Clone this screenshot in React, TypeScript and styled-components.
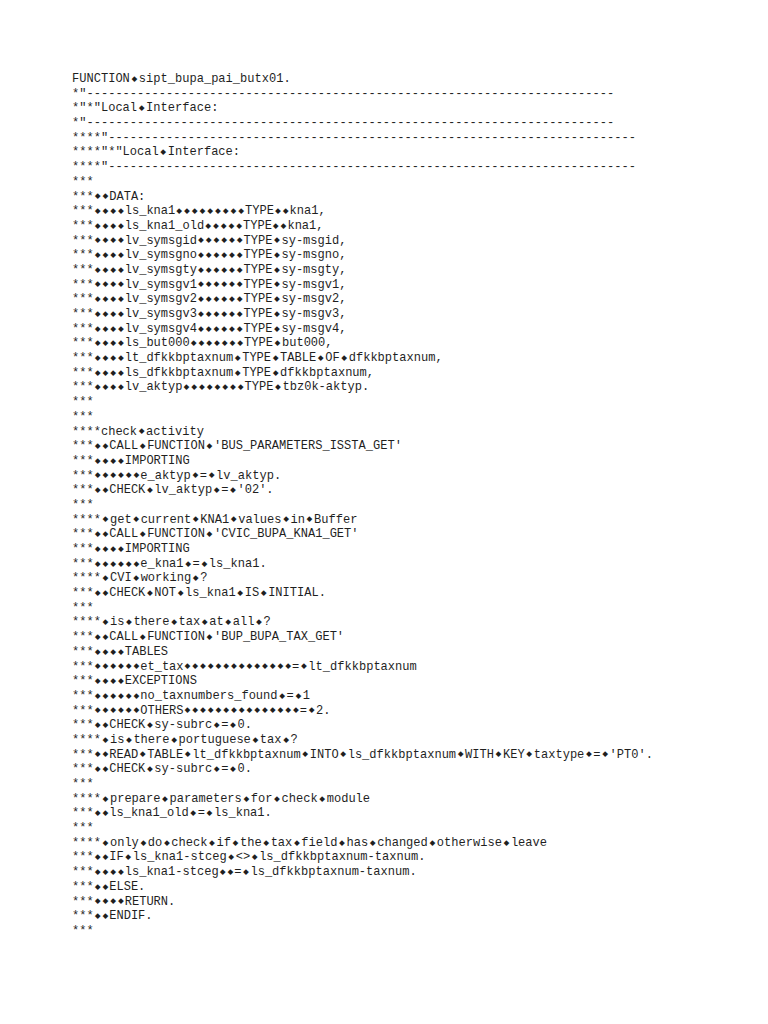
import React from "react";
import styled, { createGlobalStyle } from "styled-components";

const Global = createGlobalStyle`
  html, body { margin: 0; padding: 0; background: #ffffff; }
  body { width: 768px; min-height: 1024px; }
`;

const Page = styled.main`
  box-sizing: border-box;
  width: 768px;
  min-height: 1024px;
  padding: 72px 0 0 72px;
  background: #ffffff;
`;

const Listing = styled.div`
  display: flex;
  flex-direction: column;
  font-family: "Liberation Mono", "Cousine", monospace;
  font-size: 12.05px;
  line-height: 14.69px;
  color: #1f1f1f;
`;

const Line = styled.div`
  height: 14.69px;
  white-space: pre;
`;

const Gap = styled.span<{ $run: boolean }>`
  display: inline-block;
  width: ${(p) => (p.$run ? "7.75px" : "9px")};
  text-align: center;
  font-family: "DejaVu Sans", sans-serif;
  font-size: 7.6px;
  line-height: 1;
  vertical-align: 1.2px;
  color: #1f1f1f;
`;

const D = "◆";
const dash = "-".repeat(73);

const lines: string[] = [
  `FUNCTION◆sipt_bupa_pai_butx01.`,
  `*"${dash}`,
  `*"*"Local◆Interface:`,
  `*"${dash}`,
  `****"${dash}`,
  `****"*"Local◆Interface:`,
  `****"${dash}`,
  `***`,
  `***◆◆DATA:`,
  `***◆◆◆◆ls_kna1◆◆◆◆◆◆◆◆◆TYPE◆◆kna1,`,
  `***◆◆◆◆ls_kna1_old◆◆◆◆◆TYPE◆◆kna1,`,
  `***◆◆◆◆lv_symsgid◆◆◆◆◆◆TYPE◆sy-msgid,`,
  `***◆◆◆◆lv_symsgno◆◆◆◆◆◆TYPE◆sy-msgno,`,
  `***◆◆◆◆lv_symsgty◆◆◆◆◆◆TYPE◆sy-msgty,`,
  `***◆◆◆◆lv_symsgv1◆◆◆◆◆◆TYPE◆sy-msgv1,`,
  `***◆◆◆◆lv_symsgv2◆◆◆◆◆◆TYPE◆sy-msgv2,`,
  `***◆◆◆◆lv_symsgv3◆◆◆◆◆◆TYPE◆sy-msgv3,`,
  `***◆◆◆◆lv_symsgv4◆◆◆◆◆◆TYPE◆sy-msgv4,`,
  `***◆◆◆◆ls_but000◆◆◆◆◆◆◆TYPE◆but000,`,
  `***◆◆◆◆lt_dfkkbptaxnum◆TYPE◆TABLE◆OF◆dfkkbptaxnum,`,
  `***◆◆◆◆ls_dfkkbptaxnum◆TYPE◆dfkkbptaxnum,`,
  `***◆◆◆◆lv_aktyp◆◆◆◆◆◆◆◆TYPE◆tbz0k-aktyp.`,
  `***`,
  `***`,
  `****check◆activity`,
  `***◆◆CALL◆FUNCTION◆'BUS_PARAMETERS_ISSTA_GET'`,
  `***◆◆◆◆IMPORTING`,
  `***◆◆◆◆◆◆e_aktyp◆=◆lv_aktyp.`,
  `***◆◆CHECK◆lv_aktyp◆=◆'02'.`,
  `***`,
  `****◆get◆current◆KNA1◆values◆in◆Buffer`,
  `***◆◆CALL◆FUNCTION◆'CVIC_BUPA_KNA1_GET'`,
  `***◆◆◆◆IMPORTING`,
  `***◆◆◆◆◆◆e_kna1◆=◆ls_kna1.`,
  `****◆CVI◆working◆?`,
  `***◆◆CHECK◆NOT◆ls_kna1◆IS◆INITIAL.`,
  `***`,
  `****◆is◆there◆tax◆at◆all◆?`,
  `***◆◆CALL◆FUNCTION◆'BUP_BUPA_TAX_GET'`,
  `***◆◆◆◆TABLES`,
  `***◆◆◆◆◆◆et_tax◆◆◆◆◆◆◆◆◆◆◆◆◆◆=◆lt_dfkkbptaxnum`,
  `***◆◆◆◆EXCEPTIONS`,
  `***◆◆◆◆◆◆no_taxnumbers_found◆=◆1`,
  `***◆◆◆◆◆◆OTHERS◆◆◆◆◆◆◆◆◆◆◆◆◆◆◆=◆2.`,
  `***◆◆CHECK◆sy-subrc◆=◆0.`,
  `****◆is◆there◆portuguese◆tax◆?`,
  `***◆◆READ◆TABLE◆lt_dfkkbptaxnum◆INTO◆ls_dfkkbptaxnum◆WITH◆KEY◆taxtype◆=◆'PT0'.`,
  `***◆◆CHECK◆sy-subrc◆=◆0.`,
  `***`,
  `****◆prepare◆parameters◆for◆check◆module`,
  `***◆◆ls_kna1_old◆=◆ls_kna1.`,
  `***`,
  `****◆only◆do◆check◆if◆the◆tax◆field◆has◆changed◆otherwise◆leave`,
  `***◆◆IF◆ls_kna1-stceg◆<>◆ls_dfkkbptaxnum-taxnum.`,
  `***◆◆◆◆ls_kna1-stceg◆◆=◆ls_dfkkbptaxnum-taxnum.`,
  `***◆◆ELSE.`,
  `***◆◆◆◆RETURN.`,
  `***◆◆ENDIF.`,
  `***`,
];

function CodeLine({ text }: { text: string }) {
  const chars = Array.from(text);
  const parts: React.ReactNode[] = [];
  let buf = "";
  chars.forEach((ch, i) => {
    if (ch === D) {
      if (buf) {
        parts.push(buf);
        buf = "";
      }
      const run = chars[i - 1] === D || chars[i + 1] === D;
      parts.push(
        <Gap key={i} $run={run}>
          {D}
        </Gap>
      );
    } else {
      buf += ch;
    }
  });
  if (buf) parts.push(buf);
  return <Line>{parts}</Line>;
}

export default function App() {
  return (
    <>
      <Global />
      <Page>
        <Listing>
          {lines.map((l, i) => (
            <CodeLine key={i} text={l} />
          ))}
        </Listing>
      </Page>
    </>
  );
}
